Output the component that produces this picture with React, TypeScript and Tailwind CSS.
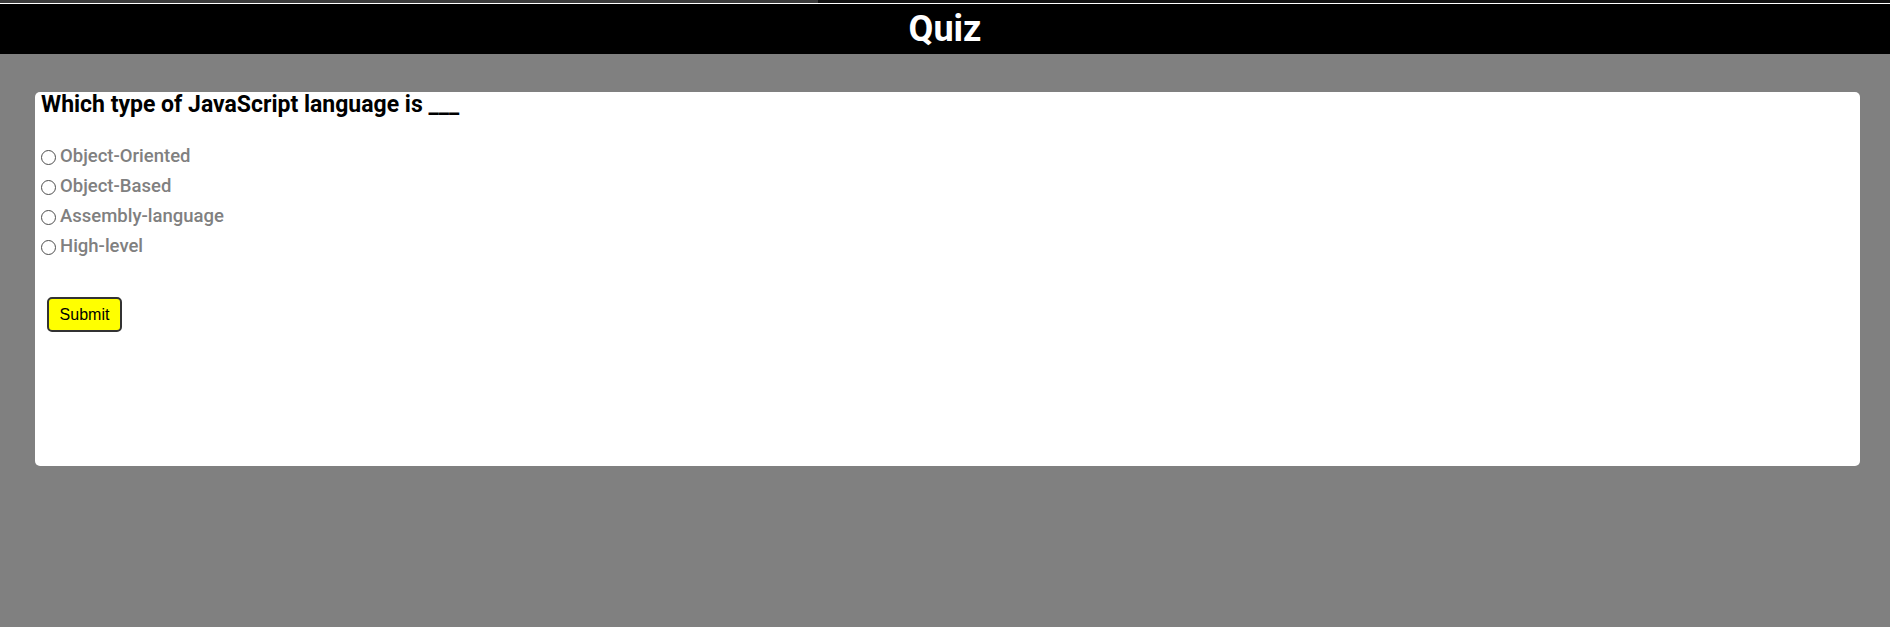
import { useState } from 'react'

const options = ['Object-Oriented', 'Object-Based', 'Assembly-language', 'High-level']

export default function App() {
  const [picked, setPicked] = useState<string | null>(null)

  return (
    <div className="min-h-screen bg-[#808080] font-['Roboto','Liberation_Sans',sans-serif]">
      {/* browser chrome remnants */}
      <div className="flex h-[3px]">
        <div className="w-[818px] bg-[#3a3a3a]" />
        <div className="flex-1 bg-[#111111]" />
      </div>
      <div className="h-px bg-white" />

      <header className="flex h-[50px] items-center justify-center bg-black">
        <h1 className="text-[36px] font-bold leading-none text-white">Quiz</h1>
      </header>

      <main className="pl-[35px] pr-[30px] pt-[38px]">
        <div className="h-[374px] rounded-[5px] bg-white pl-[6px]">
          <h3 className="text-[23px] font-bold leading-[26px] text-black">
            Which type of JavaScript language is ___
          </h3>

          <ul className="mt-[24px]">
            {options.map((opt) => (
              <li key={opt} className="flex h-[30px] items-center">
                <label className="flex cursor-pointer items-center">
                  <input
                    type="radio"
                    name="answer"
                    checked={picked === opt}
                    onChange={() => setPicked(opt)}
                    className="m-0 mr-[4px] h-[15px] w-[15px] shrink-0 appearance-none rounded-full border border-[#4d4d4d] bg-white checked:border-[4px] checked:border-[#0075ff]"
                  />
                  <span className="text-[18.5px] font-medium text-[#808080]">{opt}</span>
                </label>
              </li>
            ))}
          </ul>

          <button className="ml-[6px] mt-[35px] h-[35px] w-[75px] rounded-[5px] border-2 border-[#333333] bg-[#ffff00] font-['Liberation_Sans',Arial,sans-serif] text-[16px] text-black">
            Submit
          </button>
        </div>
      </main>
    </div>
  )
}
